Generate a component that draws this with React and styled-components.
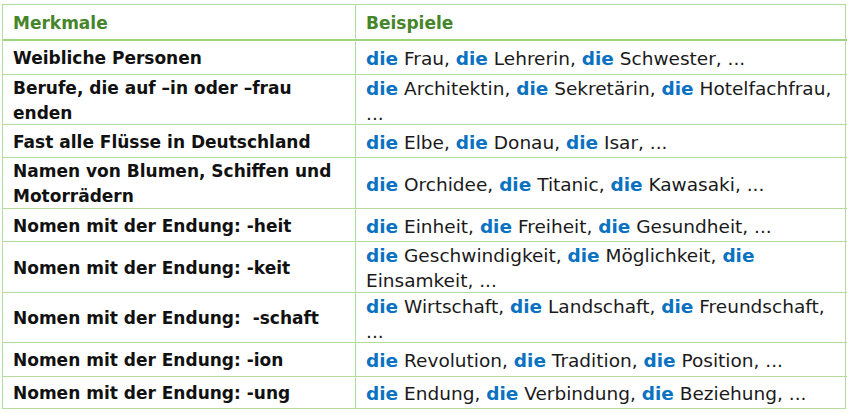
import React from "react";
import styled, { createGlobalStyle } from "styled-components";

const Global = createGlobalStyle`
  html, body { margin: 0; padding: 0; background: #ffffff; }
  body { font-family: "DejaVu Sans", "Liberation Sans", sans-serif; }
`;

const Page = styled.div`
  width: 851px;
  height: 413px;
  padding: 4px 0 0 2px;
  box-sizing: border-box;
`;

const Table = styled.div`
  display: grid;
  grid-template-columns: 352px 492px;
  width: 844px;
  border: 1px solid #b4dc9c;
  box-sizing: border-box;
`;

const Cell = styled.div`
  height: ${(p) => p.$h}px;
  box-sizing: border-box;
  display: flex;
  align-items: center;
  padding: 2px 11px 0 10px;
  border-top: ${(p) => (p.$first ? "none" : p.$thick ? "2px solid #9bd37f" : "1px solid #b4dc9c")};
  border-left: ${(p) => (p.$right ? "1px solid #b4dc9c" : "none")};
  font-size: ${(p) => (p.$right ? 18.5 : 17)}px;
  line-height: 25px;
  color: #111111;
`;

const Head = styled.span`
  font-weight: bold;
  font-size: 17px;
  color: #46852a;
`;

const Label = styled.span`
  font-weight: bold;
  color: #111111;
  white-space: pre-wrap;
`;

const Example = styled.span`
  color: #1a1a1a;
`;

const Die = styled.b`
  color: #0b72c1;
`;

const rows = [
  { h: 35, label: "Weibliche Personen", ex: ["Frau", "Lehrerin", "Schwester"] },
  { h: 50, label: "Berufe, die auf –in oder –frau enden", ex: ["Architektin", "Sekretärin", "Hotelfachfrau"] },
  { h: 33, label: "Fast alle Flüsse in Deutschland", ex: ["Elbe", "Donau", "Isar"] },
  { h: 51, label: "Namen von Blumen, Schiffen und Motorrädern", ex: ["Orchidee", "Titanic", "Kawasaki"] },
  { h: 33, label: "Nomen mit der Endung: -heit", ex: ["Einheit", "Freiheit", "Gesundheit"] },
  { h: 51, label: "Nomen mit der Endung: -keit", ex: ["Geschwindigkeit", "Möglichkeit", "Einsamkeit"] },
  { h: 50, label: "Nomen mit der Endung:  -schaft", ex: ["Wirtschaft", "Landschaft", "Freundschaft"] },
  { h: 34, label: "Nomen mit der Endung: -ion", ex: ["Revolution", "Tradition", "Position"] },
  { h: 32, label: "Nomen mit der Endung: -ung", ex: ["Endung", "Verbindung", "Beziehung"] },
];

export default function App() {
  return (
    <Page>
      <Global />
      <Table>
        <Cell $first $h={34}>
          <Head>Merkmale</Head>
        </Cell>
        <Cell $first $right $h={34}>
          <Head>Beispiele</Head>
        </Cell>
        {rows.map((r, i) => (
          <React.Fragment key={i}>
            <Cell $thick={i === 0} $h={r.h}>
              <Label>{r.label}</Label>
            </Cell>
            <Cell $thick={i === 0} $right $h={r.h}>
              <Example>
                {r.ex.map((w, j) => (
                  <React.Fragment key={j}>
                    <Die>die</Die> {w},{" "}
                  </React.Fragment>
                ))}
                ...
              </Example>
            </Cell>
          </React.Fragment>
        ))}
      </Table>
    </Page>
  );
}
